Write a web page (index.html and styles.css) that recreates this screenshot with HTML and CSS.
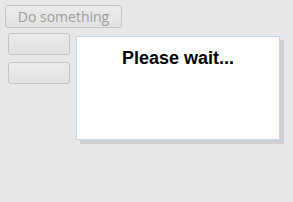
FILE: index.html
```html
<!DOCTYPE html>
<html>
<head>
<meta charset="utf-8">
<link rel="stylesheet" href="styles.css">
</head>
<body>
<div class="page">
  <button class="btn main" disabled>Do something</button>
  <div class="stack">
    <button class="btn small" disabled></button>
    <button class="btn small" disabled></button>
  </div>
</div>
<div class="dialog">
  <div class="title">Please wait...</div>
</div>
</body>
</html>
```
FILE: styles.css
```css
html, body {
  margin: 0;
  padding: 0;
  background: #e8e8e8;
  width: 293px;
  height: 202px;
  overflow: hidden;
}
.page {
  display: flex;
  flex-direction: column;
  align-items: flex-start;
  padding: 5px 0 0 5px;
}
.btn {
  box-sizing: border-box;
  border: 1px solid #c4c4c4;
  border-radius: 3px;
  background: linear-gradient(#ececec, #e2e2e2);
  padding: 0;
  margin: 0;
}
.main {
  width: 117px;
  height: 23px;
  font-family: "Open Sans", sans-serif;
  font-size: 14px;
  line-height: 21px;
  color: #9c9c9c;
}
.stack {
  display: flex;
  flex-direction: column;
  gap: 7px;
  margin: 5px 0 0 3px;
}
.small {
  width: 62px;
  height: 22px;
}
.dialog {
  position: absolute;
  left: 76px;
  top: 36px;
  width: 204px;
  height: 104px;
  box-sizing: border-box;
  background: #fff;
  border: 1px solid #c0d6f6;
  box-shadow: 4px 4px 0 #cfcfcf;
}
.title {
  font-family: "Liberation Sans", Arial, sans-serif;
  font-weight: bold;
  font-size: 18px;
  color: #000;
  text-align: center;
  margin-top: 11px;
}
```
